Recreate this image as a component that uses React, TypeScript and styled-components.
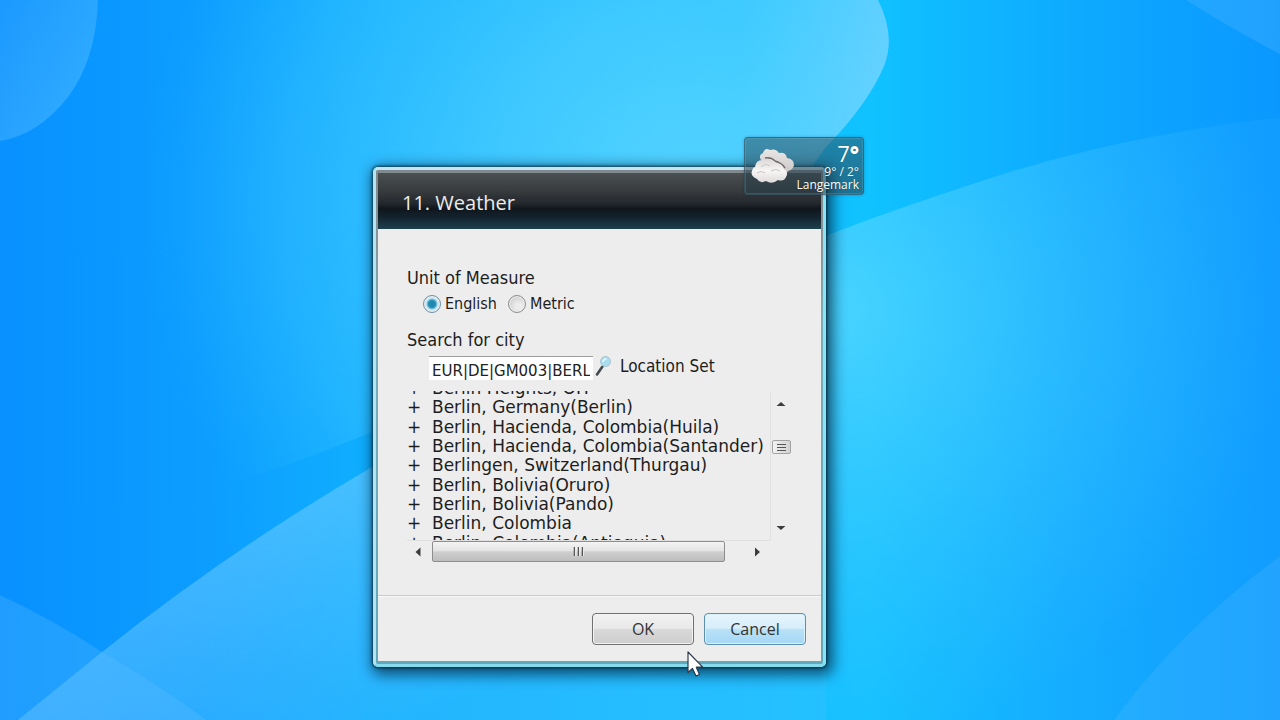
import React, { useState } from "react";
import styled, { createGlobalStyle } from "styled-components";

const uiFont = '"Open Sans", "Noto Sans", sans-serif';
const formFont = '"DejaVu Sans Condensed", "DejaVu Sans", sans-serif';
const listFont = '"DejaVu Sans", sans-serif';

const GlobalStyle = createGlobalStyle`
  *, *::before, *::after { box-sizing: border-box; }
  body { margin: 0; font-family: ${uiFont}; color: #1d1d1d; }
`;

const Desktop = styled.main`
  position: relative;
  min-height: 100vh;
  overflow: hidden;
  background: #16a5ff;
`;

const Wallpaper = styled.svg`
  position: absolute;
  inset: 0;
  width: 100%;
  height: 100%;
`;

const DialogWindow = styled.section`
  position: absolute;
  left: 373px;
  top: 167px;
  width: 453px;
  padding: 3px 2px;
  border: 3px solid;
  border-color: #c3e6f0 #86e6f8 #86dcee #b4e4f0;
  border-radius: 5px;
  background: linear-gradient(#80898f, #8a9499 14%, #79aebb 30%, #5fa9bb);
  box-shadow: 0 0 3px 1px rgba(0, 25, 40, 0.75), 3px 4px 14px 4px rgba(0, 30, 50, 0.68);
`;

const TitleBar = styled.header`
  display: flex;
  align-items: center;
  height: 56px;
  padding: 0 24px;
  background: linear-gradient(#4b5053 0%, #35393c 35%, #22272c 55%, #10161c 64%, #13222d 78%, #1d414e 100%);
`;

const Title = styled.h1`
  margin: 0;
  padding-top: 3px;
  font: 400 20px/28px ${uiFont};
  color: #ececec;
`;

const Form = styled.form`
  margin: 0;
  background: #ededed;
`;

const Fields = styled.div`
  display: flex;
  flex-direction: column;
  height: 366px;
  padding: 37px 24px 0 29px;
`;

const UnitGroup = styled.fieldset`
  margin: 0;
  padding: 0;
  border: 0;
`;

const GroupLabel = styled.legend`
  padding: 0;
  font: 18px/24px ${formFont};
`;

const FieldLabel = styled.label`
  margin-top: 13px;
  font: 18px/24px ${formFont};
`;

const RadioRow = styled.div`
  display: flex;
  gap: 11px;
  padding: 3px 0 0 16px;
`;

const RadioLabel = styled.label`
  display: flex;
  align-items: center;
  gap: 4px;
  font: 16px/22px ${formFont};
`;

const Radio = styled.input`
  appearance: none;
  flex: none;
  width: 18px;
  height: 18px;
  margin: 0;
  border: 1px solid #8a8d8f;
  border-radius: 50%;
  background: radial-gradient(circle at 60% 65%, #ececec 20%, #cfcfcf 75%);
  box-shadow: inset 0 0 0 1px #f0f0f0;

  &:checked {
    border-color: #6f90a6;
    background: radial-gradient(circle, #2089b2 0 3px, #3d9fc4 4px, #d3ebf5 6px, #c3dfec 9px);
  }
`;

const SearchRow = styled.div`
  display: flex;
  align-items: flex-start;
  padding: 4px 0 0 22px;
`;

const CityInput = styled.input`
  width: 164px;
  height: 24px;
  margin: 0;
  padding: 4px 3px 0;
  border: 0;
  border-top: 1px solid #9c9c9c;
  border-radius: 0;
  background: #fff;
  color: #222;
  font: 15px/18px ${listFont};
  outline: 0;
`;

const SearchButton = styled.button`
  display: flex;
  width: 22px;
  height: 24px;
  padding: 0;
  border: 0;
  background: none;
`;

const Status = styled.output`
  padding-left: 5px;
  font: 17px/20px ${formFont};
`;

const ResultsGrid = styled.div`
  display: grid;
  grid-template-columns: 364px 20px;
  grid-template-rows: 150px 21px;
  margin-top: 11px;
`;

const ListViewport = styled.div`
  overflow: hidden;
  border-right: 1px solid #e2e2e2;
  border-bottom: 1px solid #e0e0e0;
`;

const CityList = styled.ul`
  display: grid;
  grid-auto-rows: 1fr;
  height: 174px;
  margin: -12px 0 0;
  padding: 0;
  list-style: none;
`;

const CityRow = styled.li`
  display: grid;
  grid-template-columns: 25px 1fr;
  font: 17px/19px ${listFont};
  white-space: nowrap;
`;

const VerticalBar = styled.div`
  display: flex;
  flex-direction: column;
  align-items: center;
`;

const HorizontalBar = styled.div`
  display: flex;
  align-items: center;
  padding-right: 2px;
`;

const ArrowButton = styled.button<{ $wide?: boolean }>`
  display: grid;
  place-items: center;
  flex: none;
  width: ${(p) => (p.$wide ? 25 : 20)}px;
  height: ${(p) => (p.$wide ? 20 : 26)}px;
  padding: 0;
  border: 0;
  background: none;
`;

const VerticalTrack = styled.div`
  flex: 1;
  padding-top: 23px;
`;

const VerticalThumb = styled.div`
  display: grid;
  place-items: center;
  width: 19px;
  height: 14px;
  border: 1px solid #a2a2a2;
  border-radius: 2px;
  background: linear-gradient(90deg, #f3f3f3, #d2d2d2);
`;

const HorizontalTrack = styled.div`
  flex: 1;
`;

const HorizontalThumb = styled.div`
  display: grid;
  place-items: center;
  width: 293px;
  height: 21px;
  border: 1px solid #8e8e8e;
  border-radius: 2px;
  background: linear-gradient(#f4f4f4, #e4e4e4 45%, #cfcfcf 52%, #bdbdbd);
`;

const Actions = styled.footer`
  display: flex;
  justify-content: flex-end;
  gap: 10px;
  padding: 17px 15px 16px;
  border-top: 1px solid #cbcbcb;
  box-shadow: inset 0 1px #f8f8f8;
`;

const ActionButton = styled.button<{ $highlighted?: boolean }>`
  width: 102px;
  height: 32px;
  padding: 0;
  border: 1px solid ${(p) => (p.$highlighted ? "#5c8fae" : "#707070")};
  border-radius: 4px;
  background: ${(p) =>
    p.$highlighted
      ? "linear-gradient(#e8f5fc, #d5edfb 48%, #b9e1f8 52%, #a5d7f4)"
      : "linear-gradient(#f2f2f2, #e8e8e8 48%, #d8d8d8 52%, #cecece)"};
  box-shadow: inset 0 0 0 1px ${(p) => (p.$highlighted ? "#d9f2fc" : "#f3f3f3")};
  color: #333;
  font: 16px/22px ${uiFont};
`;

const Gadget = styled.aside`
  position: absolute;
  left: 744px;
  top: 137px;
  display: flex;
  justify-content: space-between;
  width: 120px;
  height: 58px;
  padding: 4px 4px 3px 6px;
  border: 1px solid rgba(60, 90, 105, 0.55);
  border-radius: 4px;
  background: linear-gradient(rgba(45, 75, 90, 0.5), rgba(40, 60, 70, 0.6));
  box-shadow: inset 0 0 0 1px rgba(150, 180, 190, 0.22), 0 0 3px rgba(0, 40, 60, 0.3);
  color: #fff;
`;

const CloudIcon = styled.svg`
  flex: none;
  width: 46px;
  height: 42px;
  margin-top: 4px;
`;

const Reading = styled.div`
  display: flex;
  flex-direction: column;
  align-items: flex-end;
  flex: 1;
  min-width: 0;
  text-shadow: 0 0 1px rgba(0, 0, 0, 0.4);
`;

const Temperature = styled.strong`
  font: 400 22px/23px ${uiFont};
`;

const Degree = styled.span`
  font-weight: 800;
`;

const Range = styled.span`
  font: 12px/12px ${uiFont};
  margin-top: 1px;
`;

const Place = styled.span`
  font: 400 12px/13px ${uiFont};
  white-space: nowrap;
`;

const Pointer = styled.svg`
  position: absolute;
  left: 686px;
  top: 650px;
  width: 18px;
  height: 28px;
`;

const cities = [
  "Berlin Heights, OH",
  "Berlin, Germany(Berlin)",
  "Berlin, Hacienda, Colombia(Huila)",
  "Berlin, Hacienda, Colombia(Santander)",
  "Berlingen, Switzerland(Thurgau)",
  "Berlin, Bolivia(Oruro)",
  "Berlin, Bolivia(Pando)",
  "Berlin, Colombia",
  "Berlin, Colombia(Antioquia)",
];

function Arrow({ d }: { d: string }) {
  return (
    <svg width="10" height="10" viewBox="0 0 10 10" aria-hidden="true">
      <path d={d} fill="#3c3c3c" />
    </svg>
  );
}

function Background() {
  return (
    <Wallpaper viewBox="0 0 1280 720" preserveAspectRatio="none" aria-hidden="true">
      <defs>
        <linearGradient id="base" x1="0" x2="1" y1="0" y2="0">
          <stop offset="0" stopColor="#0891ff" />
          <stop offset="0.15" stopColor="#0c9cff" />
          <stop offset="0.3" stopColor="#10b0ff" />
          <stop offset="0.5" stopColor="#12bcff" />
          <stop offset="0.68" stopColor="#10c2ff" />
          <stop offset="0.84" stopColor="#0eaaff" />
          <stop offset="1" stopColor="#0a98ff" />
        </linearGradient>
        <radialGradient id="glow" gradientUnits="userSpaceOnUse" cx="0" cy="0" r="1" gradientTransform="translate(700 200) scale(560 520)">
          <stop offset="0" stopColor="#62d8ff" stopOpacity="0.85" />
          <stop offset="0.4" stopColor="#54d0ff" stopOpacity="0.65" />
          <stop offset="0.75" stopColor="#44c6ff" stopOpacity="0.35" />
          <stop offset="1" stopColor="#30bcff" stopOpacity="0" />
        </radialGradient>
        <linearGradient id="petal" gradientUnits="userSpaceOnUse" x1="740" y1="0" x2="890" y2="0">
          <stop offset="0" stopColor="#8fdcff" stopOpacity="0" />
          <stop offset="1" stopColor="#a4dcff" stopOpacity="0.4" />
        </linearGradient>
        <radialGradient id="wave" gradientUnits="userSpaceOnUse" cx="0" cy="0" r="1" gradientTransform="translate(820 310) scale(470 430)">
          <stop offset="0" stopColor="#62dcff" stopOpacity="0.7" />
          <stop offset="0.5" stopColor="#52cfff" stopOpacity="0.4" />
          <stop offset="1" stopColor="#46bcff" stopOpacity="0.12" />
        </radialGradient>
        <linearGradient id="lower" gradientUnits="userSpaceOnUse" x1="320" y1="500" x2="420" y2="720">
          <stop offset="0" stopColor="#78d0ff" stopOpacity="0.5" />
          <stop offset="1" stopColor="#50c0ff" stopOpacity="0.3" />
        </linearGradient>
        <linearGradient id="corner" gradientUnits="userSpaceOnUse" x1="0" y1="0" x2="95" y2="60">
          <stop offset="0" stopColor="#6cbcff" stopOpacity="0.2" />
          <stop offset="1" stopColor="#6cccff" stopOpacity="0.36" />
        </linearGradient>
      </defs>
      <rect width="1280" height="720" fill="url(#base)" />
      <path d="M0 0H878Q896 36 884 66Q868 104 826 147L700 330L372 432Q260 478 160 505L0 540Z" fill="url(#glow)" />
      <path d="M740 0H878Q896 36 884 66Q868 104 826 147L740 240Z" fill="url(#petal)" />
      <path d="M0 0H98Q96 60 68 97Q38 135 0 141Z" fill="url(#corner)" />
      <path d="M1186 0H1280V54Q1230 28 1186 0Z" fill="#5cbcff" fillOpacity="0.28" />
      <path d="M826 236Q880 214 1000 175Q1140 132 1280 118V720H826Z" fill="url(#wave)" />
      <path d="M18 720L102 652Q230 550 372 467L400 455H826V720Z" fill="url(#lower)" />
      <path d="M0 595Q54 620 102 652Q158 684 206 720H0Z" fill="#62c0ff" fillOpacity="0.27" />
      <path d="M1280 556Q1180 630 1114 720H1280Z" fill="#5abfff" fillOpacity="0.22" />
    </Wallpaper>
  );
}

function CityResults() {
  return (
    <ResultsGrid>
      <ListViewport>
        <CityList aria-label="Matching cities">
          {cities.map((city) => (
            <CityRow key={city}>
              <span>+</span>
              <span>{city}</span>
            </CityRow>
          ))}
        </CityList>
      </ListViewport>
      <VerticalBar>
        <ArrowButton type="button" aria-label="Scroll up">
          <Arrow d="M5 3L9.5 7H0.5Z" />
        </ArrowButton>
        <VerticalTrack>
          <VerticalThumb>
            <svg width="9" height="8" viewBox="0 0 9 8" aria-hidden="true">
              <path d="M0 1.5H9M0 4.5H9M0 7.5H9" stroke="#555" strokeWidth="1" />
            </svg>
          </VerticalThumb>
        </VerticalTrack>
        <ArrowButton type="button" aria-label="Scroll down">
          <Arrow d="M0.5 3H9.5L5 7Z" />
        </ArrowButton>
      </VerticalBar>
      <HorizontalBar>
        <ArrowButton type="button" $wide aria-label="Scroll left">
          <Arrow d="M5.5 0.5V9.5L0.5 5Z" />
        </ArrowButton>
        <HorizontalTrack>
          <HorizontalThumb>
            <svg width="11" height="9" viewBox="0 0 11 9" aria-hidden="true">
              <path d="M1.5 0V9M5.5 0V9M9.5 0V9" stroke="#555" strokeWidth="1.5" />
              <path d="M2.8 0V9M6.8 0V9M10.8 0V9" stroke="#fff" strokeWidth="1" />
            </svg>
          </HorizontalThumb>
        </HorizontalTrack>
        <ArrowButton type="button" $wide aria-label="Scroll right">
          <Arrow d="M3 0.5L8 5L3 9.5Z" />
        </ArrowButton>
      </HorizontalBar>
    </ResultsGrid>
  );
}

function WeatherDialog() {
  const [unit, setUnit] = useState("English");
  const [query, setQuery] = useState("EUR|DE|GM003|BERL");
  return (
    <DialogWindow role="dialog" aria-labelledby="dialog-title">
      <TitleBar>
        <Title id="dialog-title">11. Weather</Title>
      </TitleBar>
      <Form onSubmit={(e) => e.preventDefault()}>
        <Fields>
          <UnitGroup>
            <GroupLabel>Unit of Measure</GroupLabel>
            <RadioRow>
              {["English", "Metric"].map((name) => (
                <RadioLabel key={name}>
                  <Radio type="radio" name="unit" checked={unit === name} onChange={() => setUnit(name)} />
                  {name}
                </RadioLabel>
              ))}
            </RadioRow>
          </UnitGroup>
          <FieldLabel htmlFor="city">Search for city</FieldLabel>
          <SearchRow>
            <CityInput id="city" type="text" value={query} onChange={(e) => setQuery(e.target.value)} />
            <SearchButton type="submit" aria-label="Search">
              <svg width="22" height="24" viewBox="0 0 22 24" aria-hidden="true">
                <path d="M9.5 10.500L4 18.500" stroke="#454b50" strokeWidth="2.600" strokeLinecap="round" />
                <circle cx="12.500" cy="5.500" r="5" fill="#a9dcee" stroke="#a6c4cf" strokeWidth="1" />
                <path d="M10 6Q10.500 3 13.500 2.800" fill="none" stroke="#e4f7fd" strokeWidth="1.600" />
              </svg>
            </SearchButton>
            <Status htmlFor="city">Location Set</Status>
          </SearchRow>
          <CityResults />
        </Fields>
        <Actions>
          <ActionButton type="submit">OK</ActionButton>
          <ActionButton type="button" $highlighted>
            Cancel
          </ActionButton>
        </Actions>
      </Form>
    </DialogWindow>
  );
}

function WeatherGadget() {
  return (
    <Gadget aria-label="Current weather">
      <CloudIcon viewBox="0 0 46 42" aria-hidden="true">
        <defs>
          <linearGradient id="cloud-back" x1="0" y1="0" x2="0" y2="1">
            <stop offset="0" stopColor="#e9e7e6" />
            <stop offset="1" stopColor="#c8c4c3" />
          </linearGradient>
          <linearGradient id="cloud-front" x1="0" y1="0" x2="0" y2="1">
            <stop offset="0" stopColor="#dcd9d8" />
            <stop offset="0.5" stopColor="#f7f6f5" />
            <stop offset="1" stopColor="#dedbda" />
          </linearGradient>
        </defs>
        <path d="M10 14Q7 9 12 7Q14 1 19 4Q25 2 28 7Q35 6 36 12Q43 13 43 19Q42 24 37 25L34 29L12 23Z" fill="url(#cloud-back)" />
        <path d="M14 12Q20 11 24 15Q31 17 34 22" fill="none" stroke="#6f6b6a" strokeWidth="1.500" />
        <path d="M4 21Q5 13 13 14Q20 11 25 17Q31 17 33 23Q38 26 35 31Q33 36 27 34Q21 39 15 35Q9 38 6 33Q-1 30 1 25Q2 21 4 21Z" fill="url(#cloud-front)" />
        <path d="M10 21Q14 17 19 20M20 25Q25 22 29 25M6 27Q10 24 14 27" fill="none" stroke="#c9c5c4" strokeWidth="1" />
      </CloudIcon>
      <Reading>
        <Temperature>
          7<Degree>°</Degree>
        </Temperature>
        <Range>9° / 2°</Range>
        <Place>Langemark</Place>
      </Reading>
    </Gadget>
  );
}

export default function App() {
  return (
    <>
      <GlobalStyle />
      <Desktop>
        <Background />
        <WeatherDialog />
        <WeatherGadget />
        <Pointer viewBox="0 0 18 28" aria-hidden="true">
          <path d="M2 2L2 22.500L6.500 18.500L10 26L13.500 24.500L10.300 17.200L16.500 16.800Z" fill="#fff" stroke="#2c3a4c" strokeWidth="1.200" strokeLinejoin="round" />
        </Pointer>
      </Desktop>
    </>
  );
}
